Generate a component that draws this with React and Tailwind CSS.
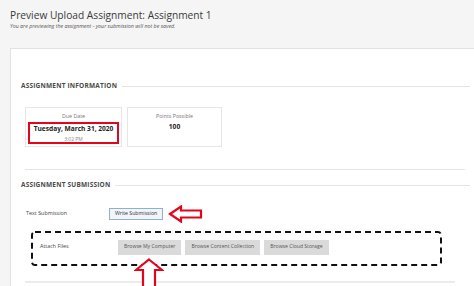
import React from "react";

// Preview Upload Assignment screen (annotated)
const fontStack = "font-['Open_Sans','Liberation_Sans',sans-serif]";

const SectionHeading = ({ title }) => (
  <div className="flex items-center h-[8px]">
    <span className="text-[6.5px] font-bold tracking-[0.2px] text-[#4a4a4a] leading-none whitespace-nowrap">
      {title}
    </span>
    <div className="flex-1 h-px bg-[#e4e4e4] ml-[5px] mr-[4px]" />
  </div>
);

const LeftArrow = () => (
  <svg width="36" height="18" viewBox="0 0 36 18" className="ml-[5px]">
    <polygon
      points="2,9 13,1.5 13,5.5 33,5.5 33,12.5 13,12.5 13,16.5"
      fill="white"
      stroke="#e3051b"
      strokeWidth="2.2"
      strokeLinejoin="miter"
    />
  </svg>
);

const UpArrow = () => (
  <svg width="30" height="30" viewBox="0 0 30 30">
    <polygon
      points="15,1.5 28,12 21,12 21,29 9,29 9,12 2,12"
      fill="white"
      stroke="#e3051b"
      strokeWidth="2.2"
    />
  </svg>
);

const BrowseButton = ({ label }) => (
  <button className="h-[15px] px-[6px] bg-[#dadada] text-[5.1px] text-[#555] leading-none whitespace-nowrap">
    {label}
  </button>
);

export default function App() {
  return (
    <div className={`${fontStack} w-[474px] h-[286px] overflow-hidden bg-[#f5f5f5] relative`}>
      {/* Header */}
      <div className="h-[48px] pl-[10px] pt-[9px]">
        <h1 className="text-[10.2px] text-[#3a3a3a] leading-[12px]">
          Preview Upload Assignment: Assignment 1
        </h1>
        <p className="mt-[3px] text-[5.3px] italic text-[#555] leading-none">
          You are previewing the assignment - your submission will not be saved.
        </p>
      </div>

      {/* Panel */}
      <div className="ml-[10px] h-[238px] bg-white border-t border-l border-[#e2e2e2] pl-[10px]">
        <div className="mt-[33px]">
          <SectionHeading title="ASSIGNMENT INFORMATION" />
        </div>

        {/* Info cards */}
        <div className="flex gap-[5px] ml-[4px] mt-[17px]">
          <div className="w-[97px] h-[40px] border border-[#e6e6e6] flex flex-col items-center pt-[6px]">
            <span className="text-[5.3px] text-[#777] leading-none">Due Date</span>
            <div className="mt-[3px] w-[91px] h-[22px] border-2 border-[#e3051b] flex flex-col items-center pt-[2px]">
              <span className="text-[6.6px] font-bold text-[#222] leading-none whitespace-nowrap">
                Tuesday, March 31, 2020
              </span>
              <span className="mt-[4px] text-[5px] text-[#888] leading-none">3:02 PM</span>
            </div>
          </div>
          <div className="w-[95px] h-[40px] border border-[#e6e6e6] flex flex-col items-center pt-[6px]">
            <span className="text-[5.3px] text-[#777] leading-none">Points Possible</span>
            <span className="mt-[5px] text-[6.6px] font-bold text-[#222] leading-none">100</span>
          </div>
        </div>

        <div className="ml-[4px] mr-[9px] mt-[22px] h-px bg-[#e4e4e4]" />

        <div className="mt-[11px]">
          <SectionHeading title="ASSIGNMENT SUBMISSION" />
        </div>

        {/* Text submission */}
        <div className="flex items-center ml-[5px] mt-[16px] h-[18px]">
          <span className="w-[83px] text-[5.4px] text-[#444] leading-none">Text Submission</span>
          <button className="h-[12px] px-[5px] border border-[#8fb0cf] bg-[#f1f4f8] text-[5.2px] text-[#333] leading-none whitespace-nowrap">
            Write Submission
          </button>
          <LeftArrow />
        </div>

        {/* Attach files (annotated with dashed box) */}
        <div className="relative ml-[10px] mt-[8px] w-[411px] h-[35px] flex items-center pl-[9px]">
          <svg className="absolute inset-0" width="411" height="35" viewBox="0 0 411 35">
            <rect
              x="1"
              y="1"
              width="409"
              height="33"
              rx="3"
              fill="none"
              stroke="#111"
              strokeWidth="2"
              strokeDasharray="6 4"
            />
          </svg>
          <span className="w-[78px] text-[5.4px] text-[#444] leading-none -mt-[3px]">Attach Files</span>
          <div className="flex gap-[4px] -mt-[3px]">
            <BrowseButton label="Browse My Computer" />
            <BrowseButton label="Browse Content Collection" />
            <BrowseButton label="Browse Cloud Storage" />
          </div>
        </div>

        <div className="ml-[4px] mr-[19px] mt-[15px] h-[2px] bg-[#ececec]" />
      </div>

      {/* Up arrow annotation */}
      <div className="absolute left-[134px] top-[258px]">
        <UpArrow />
      </div>
    </div>
  );
}
